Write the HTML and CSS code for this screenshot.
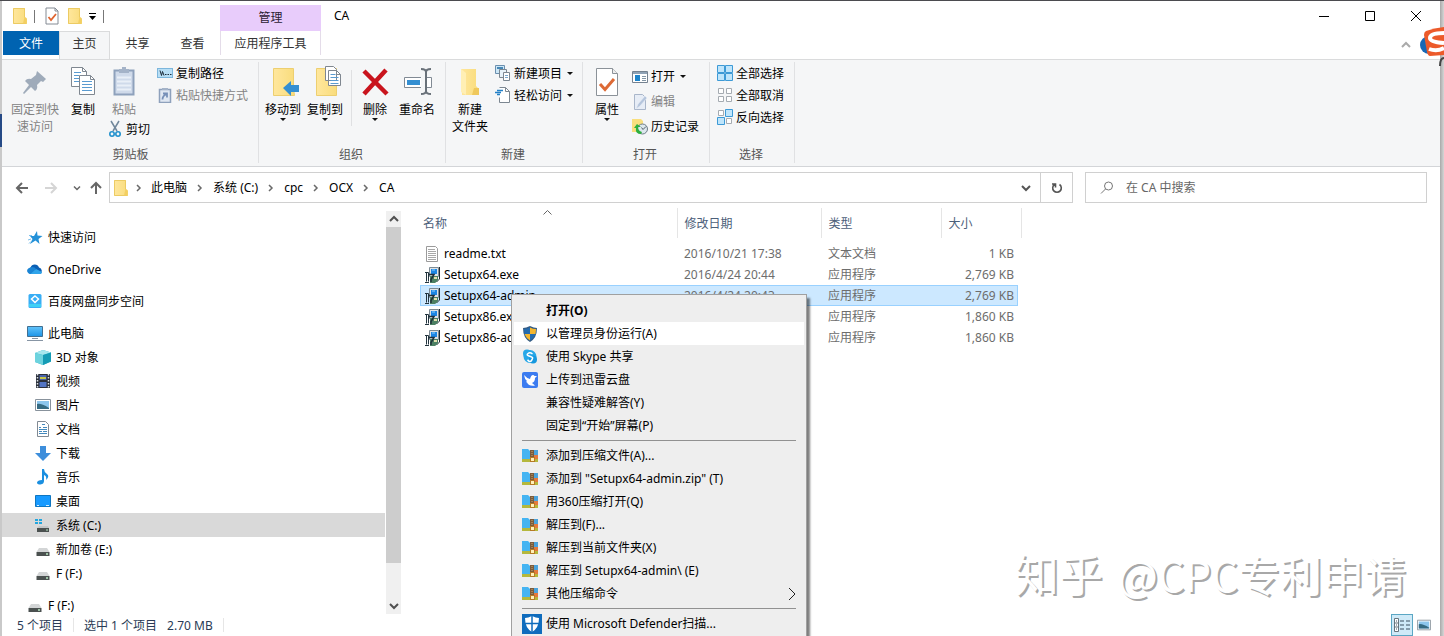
FILE: index.html
```html
<!DOCTYPE html>
<html lang="zh-CN">
<head>
<meta charset="utf-8">
<title>CA</title>
<link rel="stylesheet" href="styles.css">
</head>
<body>
<svg class="defs" aria-hidden="true">
  <defs>
    <linearGradient id="gFolder" x1="0" y1="0" x2="1" y2="0"><stop offset="0" stop-color="#ffe79d"/><stop offset="1" stop-color="#f9dc7c"/></linearGradient>
    <linearGradient id="gSky" x1="0" y1="0" x2="0" y2="1"><stop offset="0" stop-color="#62c4fb"/><stop offset="1" stop-color="#1e94e6"/></linearGradient>
  </defs>
  <symbol id="folder" viewBox="0 0 16 18"><path d="M1 1h12v9l2 2v5H1z" fill="url(#gFolder)"/><path d="M1.500 1.500h11v9M14 11.500v5H1.500v-15" fill="none" stroke="#eccb63"/><path d="M12.500 10l-1.500 6.500h3.500V11z" fill="#f3cf62"/></symbol>
  <symbol id="check" viewBox="0 0 14 18"><path d="M1 1h9l3 3v13H1z" fill="#fff" stroke="#848b94"/><path d="M10 1v3h3" fill="none" stroke="#848b94"/><path d="M3.500 10l2.500 3 5-6" fill="none" stroke="#e0642f" stroke-width="1.800"/></symbol>
  <symbol id="bigcheck" viewBox="0 0 24 32"><path d="M1.500 2.500h16l5 5v22h-21z" fill="#fff" stroke="#8b9299"/><path d="M17.500 2.500v5h5" fill="#eee" stroke="#8b9299"/><path d="M5 18l5 5.500L19 13" fill="none" stroke="#dd6a35" stroke-width="3"/></symbol>
  <symbol id="pin" viewBox="0 0 32 32"><path d="M18 5l9 8-3 3-2-1-4 4q1 4-2 6l-4-4-7 7-1-1 6-8-4-4q2-3 6-2l5-4z" fill="#9fabba"/></symbol>
  <symbol id="copy" viewBox="0 0 32 32"><g fill="#fff" stroke="#7f8790"><path d="M4.500 1.500h11l4 4v15h-15z"/><path d="M15.500 1.500v4h4" fill="none"/><path d="M12.500 9.500h11l4 4v15h-15z"/><path d="M23.500 9.500v4h4" fill="none"/></g><path d="M7 6.500h7M7 9.500h5M7 12.500h5M7 15.500h5M15 15.500h10M15 18.500h10M15 21.500h10M15 24.500h10" stroke="#5a9bd0" fill="none"/></symbol>
  <symbol id="paste" viewBox="0 0 32 32"><rect x="6.500" y="4.500" width="19" height="24" fill="#cfdaea" stroke="#8ea1bc" stroke-width="2"/><path d="M11 7V3h3V1h4v2h3v4z" fill="#a4b3c8"/><path d="M9 11.500h14M9 15.500h14M9 19.500h14M9 23.500h14" stroke="#e9eff7" stroke-width="2"/></symbol>
  <symbol id="path" viewBox="0 0 16 16"><rect x=".5" y="3.500" width="15" height="9" fill="#b7def5" stroke="#7cb6dc"/><path d="M3 5.500l1.500 5 1-4 1.500 4" fill="none" stroke="#1d2d3c"/><path d="M8 9.500h1.500M10.500 9.500H12M13 9.500h1.500" stroke="#1d2d3c"/></symbol>
  <symbol id="pshort" viewBox="0 0 16 16"><path d="M2.500 2.500h11v13h-11z" fill="#dfe7f2" stroke="#8ea1bc" stroke-width="1.500"/><path d="M5 3V1h6v2z" fill="#a4b3c8"/><path d="M5.500 12.500q0-4 4-5M6 6.500h4v4" fill="none" stroke="#7790b8" stroke-width="1.800"/></symbol>
  <symbol id="cut" viewBox="0 0 12 18"><path d="M2 1l6 10M10 1L4 11" stroke="#71879b" stroke-width="1.500"/><circle cx="3" cy="14" r="2.200" fill="none" stroke="#2291cd" stroke-width="1.600"/><circle cx="9" cy="14" r="2.200" fill="none" stroke="#2291cd" stroke-width="1.600"/></symbol>
  <symbol id="move" viewBox="0 0 32 32"><path d="M6.500 2.500h20v20l1 7h-21z" fill="url(#gFolder)" stroke="#edcf70"/><path d="M16 22l8-7v4h8v7h-8v4z" fill="#348fd2"/></symbol>
  <symbol id="copyto" viewBox="0 0 32 32"><path d="M7.500 2.500h20v27h-20z" fill="url(#gFolder)" stroke="#edcf70"/><path d="M16.500 .5h8l3 3v11h-11zM19.500 4.500h8l4 4v11h-12z" fill="#fff" stroke="#7f8790"/><path d="M27.500 4.500v4h4" fill="none" stroke="#7f8790"/><path d="M21.500 8.500h5M21.500 11.500h8M21.500 14.500h8M21.500 17.500h8" stroke="#5a9bd0"/></symbol>
  <symbol id="del" viewBox="0 0 32 32"><path d="M5 5l23 23M27 4L5 28" stroke="#c9141d" stroke-width="4.500"/></symbol>
  <symbol id="ren" viewBox="0 0 32 32"><path d="M20 11.500H3.500v10H20M26 11.500h4.500v10H26" fill="#fff" stroke="#818a94"/><rect x="6" y="14" width="13" height="5" fill="#348fd2"/><path d="M20 3q5 0 5 3q0-3 5-3M20 28q5 0 5-3q0 3 5 3M25 6v19" fill="none" stroke="#697179" stroke-width="2"/></symbol>
  <symbol id="newf" viewBox="0 0 32 32"><path d="M7 3h15v17l3 3v6H8z" fill="url(#gFolder)"/><path d="M7 3l5 4v22l-5-3z" fill="#ffefb5"/><path d="M20 22l-2 7h7v-7z" fill="#efc85c"/></symbol>
  <symbol id="newi" viewBox="0 0 16 16"><path d="M.5 .5h9v8h-9z" fill="#cce7f7" stroke="#6b8fae"/><path d="M2 3h6" stroke="#4787b5" stroke-width="2"/><path d="M4.500 4.500h7v8h-7z" fill="#e8f3fa" stroke="#7c8791"/><path d="M8.500 7.500h6v8h-6z" fill="#fff" stroke="#7c8791"/><path d="M10 10.500h3M10 12.500h3" stroke="#7aa7cc"/></symbol>
  <symbol id="easy" viewBox="0 0 16 16"><path d="M4.500 .5h6l4 4v11h-10v-5" fill="#fff" stroke="#7c8791"/><path d="M10.500 .5v4h4" fill="none" stroke="#7c8791"/><path d="M2 3.500h6M0 5.500h6M2 7.500h3" stroke="#2380c7" stroke-width="1.500"/></symbol>
  <symbol id="open" viewBox="0 0 16 16"><path d="M.5 2.500h15v11H.5z" fill="#fff" stroke="#758290"/><path d="M1 4h14" stroke="#8fa2b5" stroke-width="2"/><rect x="3" y="6" width="5" height="6" fill="#1c84cb"/><path d="M10 7.500h4M10 9.500h4M10 11.500h4" stroke="#8295a5"/></symbol>
  <symbol id="edit" viewBox="0 0 16 16"><path d="M2.500 .5h8l3 3v12h-11z" fill="#e7edf6" stroke="#a9b6ca"/><path d="M4 15l2-5 7-8 2 2-7 8z" fill="#b5c5dc" stroke="#e9eff7" stroke-width=".6"/></symbol>
  <symbol id="hist" viewBox="0 0 16 16"><path d="M0 0h9l2 2v11H0z" fill="#f9df7e"/><circle cx="10.500" cy="10" r="5" fill="#dce7ed" stroke="#6b7b86"/><path d="M9.500 8.500l1.500 2 3-3" fill="none" stroke="#515f69"/><path d="M9 15Q3 15 4 9L2 9l3-4 4 3H6q0 4 4 5z" fill="#2eaf3f"/></symbol>
  <symbol id="selall" viewBox="0 0 16 16"><path d="M.5.500h7v7h-7zM8.500.500h7v7h-7zM.5 8.500h7v7h-7zM8.500 8.500h7v7h-7z" fill="#bfe5fb" stroke="#3d9ad6"/></symbol>
  <symbol id="selnone" viewBox="0 0 16 16"><path d="M1.500 1.500h5v5h-5zM9.500 1.500h5v5h-5zM1.500 9.500h5v5h-5zM9.500 9.500h5v5h-5z" fill="#fff" stroke="#a5abb1"/></symbol>
  <symbol id="selinv" viewBox="0 0 16 16"><path d="M1.500 1.500h5v5h-5zM9.500 9.500h5v5h-5z" fill="#fff" stroke="#a5abb1"/><path d="M8.500.500h7v7h-7zM.5 8.500h7v7h-7z" fill="#bfe5fb" stroke="#3d9ad6"/></symbol>
  <symbol id="star" viewBox="0 0 16 16"><path d="M10 2l.5 4.500 5 .5-4 3 1 5-4-3.500-5.500 3.500 2.500-5L3 7h4z" fill="#2491d8"/><path d="M1 11l3-1M2 6.500h3M2 14.500l2-2" stroke="#7cc0ec"/></symbol>
  <symbol id="cloud" viewBox="0 0 16 16"><path d="M3.500 13a3.500 3.500 0 0 1 0-6.500A4.500 4.500 0 0 1 12 6.500 3.500 3.500 0 0 1 13 13z" fill="#0a5fb4"/><path d="M2 12l7-4 6 3q0 2-2 2H3z" fill="#30a4ea"/><path d="M9 8q-1-2-4-2l-3 1q-2 1-2 3 1 3 3.500 3z" fill="#1b84d4"/></symbol>
  <symbol id="baidu" viewBox="0 0 16 16"><rect x="1.500" y="1" width="13" height="14" rx="1.500" fill="#39aef5"/><path d="M2 11h12v3H2z" fill="#3fd0f5"/><path d="M8 3l3.500 3L8 9.500 4.500 6z" fill="none" stroke="#fff" stroke-width="1.500"/></symbol>
  <symbol id="pc" viewBox="0 0 16 16"><path d="M.5 1.500h15v10H.5z" fill="url(#gSky)" stroke="#416f91"/><path d="M5 13.500h6M0 15.500h16" stroke="#8795a4"/></symbol>
  <symbol id="cube" viewBox="0 0 16 16"><path d="M8 1l8 2.500v9L8 16 0 13V4z" fill="#2fb6c9"/><path d="M8 1l8 2.500L8 6 0 4z" fill="#a7e7ee"/><path d="M8 6l8-2.500v9L8 16z" fill="#159cb5"/><path d="M0 4l8 2v10l-8-3z" fill="#6dd3de"/></symbol>
  <symbol id="video" viewBox="0 0 16 16"><path d="M1 1h14v14H1z" fill="#2a2f3a"/><path d="M2.500 1v14M13.500 1v14" stroke="#dce1e5" stroke-width="1.500" stroke-dasharray="1.500 1.500"/><path d="M4.500 2h7v5h-7z" fill="#4863ad"/><path d="M5 5h6" stroke="#c7c548" stroke-width="2"/><path d="M4.500 9h7v5h-7z" fill="#5274c4"/></symbol>
  <symbol id="pic" viewBox="0 0 16 16"><path d="M.5 2.500h15v11H.5z" fill="#fff" stroke="#88929c"/><path d="M2 4h12v8H2z" fill="#8cc6ed"/><path d="M2 7q4-1 12 4v1H2z" fill="#356b83"/></symbol>
  <symbol id="doc" viewBox="0 0 16 16"><path d="M2.500 .5h8l3 3v12h-11z" fill="#fff" stroke="#818a93"/><path d="M7 3.500h3M4 6.500h2M8 6.500h4M4 8.500h8M4 10.500h3M8 10.500h4M4 12.500h8" stroke="#4389bd"/></symbol>
  <symbol id="down" viewBox="0 0 16 16"><path d="M5 1h6v7h5l-8 8-8-8h5z" fill="#3d8edb"/></symbol>
  <symbol id="music" viewBox="0 0 16 16"><path d="M7 0h2q0 3 3 5t-1 6q1-4-2-5v6q0 3-3.500 3.500Q2 15.500 2 13.500 2.500 11 7 11z" fill="#1a8fe0"/></symbol>
  <symbol id="desk" viewBox="0 0 16 16"><path d="M.5 2.500h15v11H.5z" fill="#179aff" stroke="#0f76c1"/><path d="M2 12.500h2M11 12.500h3" stroke="#d6efff"/></symbol>
  <symbol id="drive" viewBox="0 0 16 16"><path d="M4 7h8l2.500 4h-13z" fill="#d3d5d6"/><path d="M1.500 11h13v4h-13z" fill="#4b5150"/><path d="M11 13h2" stroke="#b9e8c3" stroke-width="1.500"/></symbol>
  <symbol id="cdrive" viewBox="0 0 16 16"><path d="M0 2h3v2H0zM4 2h3v2H4zM0 5h3v2H0zM4 5h3v2H4z" fill="#22a6df"/><path d="M4 9h9l1 2H2z" fill="#c3c6c8"/><path d="M2 11h12v4H2z" fill="#4b5150"/><path d="M11 13h2" stroke="#b9e8c3"/></symbol>
  <symbol id="txt" viewBox="0 0 16 16"><path d="M2.500 .5h9l2 2v13h-11z" fill="#fff" stroke="#9b9b9b"/><path d="M4 3.500h7M4 5.500h8M4 7.500h8M4 9.500h8M4 11.500h8M4 13.500h8" stroke="#a8a8a8"/></symbol>
  <symbol id="setup" viewBox="0 0 16 16"><path d="M5.500.500h9v9h-9z" fill="#dfe3e6" stroke="#7d8b94"/><path d="M7 2h6v5H7z" fill="#1c86e4"/><path d="M8 3h3" stroke="#8fd0fb"/><path d="M15.500 0v12l-3 3" fill="none" stroke="#1f2a31"/><path d="M6 9h8v4q-1 2-3 3H6z" fill="#4c8063"/><path d="M10 10h3v2h-3z" fill="#e4dfae"/><path d="M1 5.500h3.500v9M2.500 5.500v9M1 15.500h4" fill="none" stroke="#23343e"/><path d="M5 7.500h5l-3 5v2.500" fill="none" stroke="#1f3039" stroke-width="1.500"/></symbol>
  <symbol id="shield" viewBox="0 0 16 16"><path d="M8 0q4 2 7 2 0 10-7 14Q1 12 1 2q3 0 7-2z" fill="#335c85"/><path d="M8 1.500V8H2.500Q2 5 2 3q3 0 6-1.500zM8 8h5.500q-1.500 4-5.500 6.500z" fill="#246baf"/><path d="M8 1.500V8h5.500Q14 5 14 3q-3 0-6-1.500zM8 8H2.500q1.500 4 5.500 6.500z" fill="#f5b62d"/></symbol>
  <symbol id="skype" viewBox="0 0 16 16"><circle cx="8" cy="7.500" r="6.500" fill="#28a8e8"/><circle cx="5" cy="4.500" r="4" fill="#28a8e8"/><circle cx="11" cy="10.500" r="4" fill="#1598df"/><path d="M10.500 5Q8 3 6 4.500t1 2.500 3.500 1.500-1 3-4-.8" fill="none" stroke="#fff" stroke-width="1.500"/></symbol>
  <symbol id="bird" viewBox="0 0 16 16"><rect width="16" height="16" rx="2" fill="#3c7cf0"/><path d="M2 3q3 3.500 6 4 1-4 3-4 1 0 1.500 1H15l-2 2q0 4-3 5l3 2.500q-6 1-8-3l-1-.5 1-1Q2.500 7 2 3z" fill="#fff"/></symbol>
  <symbol id="zip" viewBox="0 0 16 16"><path d="M0 1h6l2 2h2v9H0z" fill="#45b4f2"/><path d="M12 2h4v9h-4z" fill="#4aa3dc"/><path d="M12 7h4v4h-4z" fill="#e5793b"/><path d="M0 11h16v3H0z" fill="#b5b83c"/><path d="M8 2h4v12H8z" fill="#7b5b3c"/><path d="M10 3v7" stroke="#cdaa70" stroke-dasharray="1 1"/><rect x="8.500" y="9.500" width="4" height="4" fill="#fff0b8" stroke="#b77a24"/></symbol>
  <symbol id="defender" viewBox="0 0 20 20"><path d="M0 0h20v20H0z" fill="#0f6cbd"/><path d="M10 2q4 2 7 2 0 10-7 14Q3 14 3 4q3 0 7-2z" fill="#fff"/><path d="M10 2v16M3 9.500h14" stroke="#0f6cbd" stroke-width="1.500"/></symbol>
  <symbol id="chevr" viewBox="0 0 8 10"><path d="M2 2l3 3-3 3" fill="none" stroke="#6a6a6a" stroke-width="1.500"/></symbol>
  <symbol id="chevd" viewBox="0 0 10 8"><path d="M1 2l4 4 4-4" fill="none" stroke="currentColor" stroke-width="2"/></symbol>
  <symbol id="chevu" viewBox="0 0 10 8"><path d="M1 6l4-4 4 4" fill="none" stroke="currentColor" stroke-width="2"/></symbol>
  <symbol id="arrow" viewBox="0 0 14 14"><path d="M13 7H2M7 2L2 7l5 5" fill="none" stroke="currentColor" stroke-width="2"/></symbol>
</svg>

<div class="desktop">
  <div class="edge-left"></div>
  <div class="window">
    <header class="titlebar">
      <div class="quick">
        <svg width="16" height="18"><use href="#folder"/></svg><i class="tick"></i>
        <svg width="14" height="18"><use href="#check"/></svg>
        <svg width="16" height="18"><use href="#folder"/></svg>
        <svg class="more" width="7" height="7" viewBox="0 0 7 7"><path d="M0 0h7v1H0zM0 3h7L3.500 7z"/></svg><i class="tick"></i>
      </div>
      <div class="context-title">管理</div>
      <div class="title">CA</div>
      <div class="caption">
        <button aria-label="最小化"><svg width="12" height="12" viewBox="0 0 12 12"><path d="M1 6.500h10" stroke="#000"/></svg></button>
        <button aria-label="最大化"><svg width="12" height="12" viewBox="0 0 12 12"><path d="M1.500 1.500h9v9h-9z" fill="none" stroke="#000"/></svg></button>
        <button aria-label="关闭"><svg width="12" height="12" viewBox="0 0 12 12"><path d="M1 1l10 10M11 1L1 11" stroke="#000"/></svg></button>
      </div>
    </header>
    <nav class="tabs">
      <button class="tab file">文件</button>
      <button class="tab home">主页</button>
      <button class="tab">共享</button>
      <button class="tab">查看</button>
      <button class="tab tool">应用程序工具</button>
      <button class="collapse" aria-label="折叠功能区"><svg width="10" height="8"><use href="#chevu"/></svg></button>
    </nav>

    <section class="ribbon">
      <div class="group g-clip">
        <div class="tools">
          <button class="big wide dim"><svg width="32" height="32"><use href="#pin"/></svg>固定到快<br>速访问</button>
          <button class="big"><svg width="32" height="32"><use href="#copy"/></svg>复制</button>
          <div class="paste-col">
            <button class="big dim"><svg width="32" height="32"><use href="#paste"/></svg>粘贴</button>
            <button class="small"><svg width="12" height="18"><use href="#cut"/></svg>剪切</button>
          </div>
          <div class="list">
            <button class="small"><svg width="16" height="16"><use href="#path"/></svg>复制路径</button>
            <button class="small dim"><svg width="16" height="16"><use href="#pshort"/></svg>粘贴快捷方式</button>
          </div>
        </div>
        <div class="glabel">剪贴板</div>
      </div>
      <div class="group g-org">
        <div class="tools">
          <button class="big"><svg width="32" height="32"><use href="#move"/></svg>移动到<i class="caret"></i></button>
          <button class="big"><svg width="32" height="32"><use href="#copyto"/></svg>复制到<i class="caret"></i></button>
          <i class="vsep"></i>
          <button class="big"><svg width="32" height="32"><use href="#del"/></svg>删除<i class="caret"></i></button>
          <button class="big"><svg width="32" height="32"><use href="#ren"/></svg>重命名</button>
        </div>
        <div class="glabel">组织</div>
      </div>
      <div class="group g-new">
        <div class="tools">
          <button class="big"><svg width="32" height="32"><use href="#newf"/></svg>新建<br>文件夹</button>
          <div class="list">
            <button class="small"><svg width="16" height="16"><use href="#newi"/></svg>新建项目<i class="caret"></i></button>
            <button class="small"><svg width="16" height="16"><use href="#easy"/></svg>轻松访问<i class="caret"></i></button>
          </div>
        </div>
        <div class="glabel">新建</div>
      </div>
      <div class="group g-open">
        <div class="tools">
          <button class="big"><svg width="24" height="32"><use href="#bigcheck"/></svg>属性<i class="caret"></i></button>
          <div class="list loose">
            <button class="small"><svg width="16" height="16"><use href="#open"/></svg>打开<i class="caret"></i></button>
            <button class="small dim"><svg width="16" height="16"><use href="#edit"/></svg>编辑</button>
            <button class="small"><svg width="16" height="16"><use href="#hist"/></svg>历史记录</button>
          </div>
        </div>
        <div class="glabel">打开</div>
      </div>
      <div class="group g-sel">
        <div class="tools">
          <div class="list">
            <button class="small"><svg width="16" height="16"><use href="#selall"/></svg>全部选择</button>
            <button class="small"><svg width="16" height="16"><use href="#selnone"/></svg>全部取消</button>
            <button class="small"><svg width="16" height="16"><use href="#selinv"/></svg>反向选择</button>
          </div>
        </div>
        <div class="glabel">选择</div>
      </div>
    </section>

    <div class="address">
      <div class="history">
        <button aria-label="后退"><svg width="14" height="14"><use href="#arrow"/></svg></button>
        <button class="off" aria-label="前进"><svg class="flip" width="14" height="14"><use href="#arrow"/></svg></button>
        <button class="recent" aria-label="最近"><svg width="8" height="6"><use href="#chevd"/></svg></button>
        <button aria-label="向上"><svg class="up" width="14" height="14"><use href="#arrow"/></svg></button>
      </div>
      <div class="crumbs">
        <svg width="16" height="18"><use href="#folder"/></svg>
        <svg class="sep" width="8" height="10"><use href="#chevr"/></svg><button>此电脑</button>
        <svg class="sep" width="8" height="10"><use href="#chevr"/></svg><button>系统 (C:)</button>
        <svg class="sep" width="8" height="10"><use href="#chevr"/></svg><button>cpc</button>
        <svg class="sep" width="8" height="10"><use href="#chevr"/></svg><button>OCX</button>
        <svg class="sep" width="8" height="10"><use href="#chevr"/></svg><button>CA</button>
        <button class="drop" aria-label="历史地址"><svg width="10" height="8"><use href="#chevd"/></svg></button>
        <button class="refresh" aria-label="刷新"><svg width="12" height="12" viewBox="0 0 12 12"><path d="M8.500 2.500a4.300 4.300 0 1 1-5 0M4.500 5.500V2H1" fill="none" stroke="#555" stroke-width="1.600"/></svg></button>
      </div>
      <label class="search">
        <svg width="14" height="14" viewBox="0 0 14 14"><circle cx="8.500" cy="5" r="4" fill="none" stroke="#777"/><path d="M5.500 8L1 12.500" stroke="#777"/></svg>
        <input type="text" placeholder="在 CA 中搜索" aria-label="搜索">
      </label>
    </div>

    <main class="main">
      <ul class="tree">
        <li class="top"><svg width="16" height="16"><use href="#star"/></svg>快速访问</li>
        <li class="top"><svg width="16" height="16"><use href="#cloud"/></svg>OneDrive</li>
        <li class="top"><svg width="16" height="16"><use href="#baidu"/></svg>百度网盘同步空间</li>
        <li class="top"><svg width="16" height="16"><use href="#pc"/></svg>此电脑</li>
        <li><svg width="16" height="16"><use href="#cube"/></svg>3D 对象</li>
        <li><svg width="16" height="16"><use href="#video"/></svg>视频</li>
        <li><svg width="16" height="16"><use href="#pic"/></svg>图片</li>
        <li><svg width="16" height="16"><use href="#doc"/></svg>文档</li>
        <li><svg width="16" height="16"><use href="#down"/></svg>下载</li>
        <li><svg width="16" height="16"><use href="#music"/></svg>音乐</li>
        <li><svg width="16" height="16"><use href="#desk"/></svg>桌面</li>
        <li class="current"><svg width="16" height="16"><use href="#cdrive"/></svg>系统 (C:)</li>
        <li><svg width="16" height="16"><use href="#drive"/></svg>新加卷 (E:)</li>
        <li><svg width="16" height="16"><use href="#drive"/></svg>F (F:)</li>
        <li class="top"><svg width="16" height="16"><use href="#drive"/></svg>F (F:)</li>
      </ul>
      <div class="scroll">
        <svg width="10" height="8"><use href="#chevu"/></svg>
        <div class="thumb"></div>
        <svg width="10" height="8"><use href="#chevd"/></svg>
      </div>
      <div class="files">
        <table>
          <thead>
            <tr><th class="c-name">名称<svg class="sorted" width="9" height="5" viewBox="0 0 9 5"><path d="M.5 4.500l4-4 4 4" fill="none" stroke="#666"/></svg></th><th class="c-date">修改日期</th><th class="c-type">类型</th><th class="c-size">大小</th></tr>
          </thead>
          <tbody>
            <tr><td><span class="fname"><svg width="16" height="16"><use href="#txt"/></svg>readme.txt</span></td><td>2016/10/21 17:38</td><td>文本文档</td><td>1 KB</td></tr>
            <tr><td><span class="fname"><svg width="16" height="16"><use href="#setup"/></svg>Setupx64.exe</span></td><td>2016/4/24 20:44</td><td>应用程序</td><td>2,769 KB</td></tr>
            <tr class="selected"><td><span class="fname"><svg width="16" height="16"><use href="#setup"/></svg>Setupx64-admin</span></td><td>2016/4/24 20:43</td><td>应用程序</td><td>2,769 KB</td></tr>
            <tr><td><span class="fname"><svg width="16" height="16"><use href="#setup"/></svg>Setupx86.exe</span></td><td>2016/4/24 20:43</td><td>应用程序</td><td>1,860 KB</td></tr>
            <tr><td><span class="fname"><svg width="16" height="16"><use href="#setup"/></svg>Setupx86-admin</span></td><td>2016/4/24 20:43</td><td>应用程序</td><td>1,860 KB</td></tr>
          </tbody>
        </table>
      </div>
    </main>

    <footer class="status">
      <span>5 个项目</span><i></i><span>选中 1 个项目</span><span class="size">2.70 MB</span><i></i>
      <div class="views">
        <button class="on" aria-label="详细信息"><svg width="16" height="14" viewBox="0 0 16 14"><path d="M.5.500h4v13h-4zM.5 5h4M.5 9h4" fill="#fff" stroke="#67757e"/><path d="M2 3h1M2 7h1M2 11h1M6 3h4M12 3h4M6 7h4M12 7h4M6 11h4M12 11h4" stroke="#3c5060"/></svg></button>
        <button aria-label="大图标"><svg width="14" height="14"><use href="#pic"/></svg></button>
      </div>
    </footer>
  </div>
  <div class="edge-right"></div>

  <div class="menu" role="menu">
    <button role="menuitem"><span class="ico"></span><b>打开(O)</b></button>
    <button role="menuitem" class="hot"><span class="ico"><svg width="16" height="16"><use href="#shield"/></svg></span>以管理员身份运行(A)</button>
    <button role="menuitem"><span class="ico"><svg width="16" height="16"><use href="#skype"/></svg></span>使用 Skype 共享</button>
    <button role="menuitem"><span class="ico"><svg width="16" height="16"><use href="#bird"/></svg></span>上传到迅雷云盘</button>
    <button role="menuitem"><span class="ico"></span>兼容性疑难解答(Y)</button>
    <button role="menuitem"><span class="ico"></span>固定到“开始”屏幕(P)</button>
    <hr>
    <button role="menuitem"><span class="ico"><svg width="16" height="16"><use href="#zip"/></svg></span>添加到压缩文件(A)...</button>
    <button role="menuitem"><span class="ico"><svg width="16" height="16"><use href="#zip"/></svg></span>添加到 "Setupx64-admin.zip" (T)</button>
    <button role="menuitem"><span class="ico"><svg width="16" height="16"><use href="#zip"/></svg></span>用360压缩打开(Q)</button>
    <button role="menuitem"><span class="ico"><svg width="16" height="16"><use href="#zip"/></svg></span>解压到(F)...</button>
    <button role="menuitem"><span class="ico"><svg width="16" height="16"><use href="#zip"/></svg></span>解压到当前文件夹(X)</button>
    <button role="menuitem"><span class="ico"><svg width="16" height="16"><use href="#zip"/></svg></span>解压到 Setupx64-admin\ (E)</button>
    <button role="menuitem"><span class="ico"><svg width="16" height="16"><use href="#zip"/></svg></span>其他压缩命令<svg class="sub" width="8" height="14" viewBox="0 0 8 14"><path d="M1 1l6 6-6 6" fill="none" stroke="#222"/></svg></button>
    <hr>
    <button role="menuitem"><span class="ico"><svg width="20" height="20"><use href="#defender"/></svg></span>使用 Microsoft Defender扫描...</button>
  </div>

  <div class="watermark"><span>知乎</span> @CPC专利申请</div>
  <svg class="ime" width="24" height="40" viewBox="0 0 24 40"><circle cx="9" cy="18" r="9" fill="#1768b5"/><path d="M6 4Q14 1 24 0v28l-14 1q-2 0-3-4L4 8q0-3 2-4z" fill="#ec5a2a"/><path d="M24 6Q10 6 10 11q0 4 14 5M9 22q8 3 15-1" fill="none" stroke="#fff" stroke-width="4"/><path d="M20 39q0-8 4-8" fill="none" stroke="#444" stroke-width="2"/></svg>
</div>
</body>
</html>
```

FILE: styles.css
```css
* { box-sizing: border-box; }
body {
  margin: 0;
  overflow: hidden;
  color: #000;
  font: 12px/17px "Noto Sans", "Noto Sans CJK SC", sans-serif;
}
button {
  margin: 0; padding: 0; border: 0;
  background: none; color: inherit; font: inherit;
}
svg { display: block; flex: none; }
.defs { position: absolute; width: 0; height: 0; }

.desktop { position: relative; display: flex; height: 100vh; overflow: hidden; border-top: 1px solid #4b4b4f; }
.edge-left { flex: 0 0 2px; background: linear-gradient(#c9c9c9 113px, #264a86 113px, #264a86 146px, #c9c9c9 146px); }
.edge-right { flex: 0 0 4px; background: linear-gradient(90deg, #a9a9a9, #d6d6d6); }
.window { display: flex; flex: 1; flex-direction: column; min-width: 0; background: #fff; }

.titlebar { display: flex; flex: 0 0 30px; }
.quick { display: flex; flex: 0 0 218px; align-items: center; padding-left: 10px; }
.quick .tick { width: 1px; height: 13px; margin: 0 10px 0 6px; background: #777; }
.quick svg + svg { margin-left: 8px; }
.quick svg + .more { margin-left: 6px; }
.quick .more + .tick { margin-left: 7px; }
.context-title { flex: 0 0 101px; margin-top: 4px; background: #e8ccfb; line-height: 26px; text-align: center; color: #2b2233; }
.title { flex: 1; padding-left: 13px; line-height: 30px; }
.caption { display: flex; padding-right: 1px; }
.caption button { display: grid; width: 46px; place-items: center; }

.tabs { display: flex; flex: 0 0 28px; padding-left: 1px; border-bottom: 1px solid #dadbdc; }
.tab { flex: 0 0 55px; height: 24px; color: #333; }
.tab.file { flex-basis: 56px; background: #0063b1; color: #fff; }
.tab.home { flex-basis: 51px; height: 28px; padding-bottom: 4px; border: 1px solid #dadbdc; border-bottom: 0; background: #f5f6f7; }
.tab.tool { flex-basis: 101px; border: 1px solid #e4dce9; border-width: 0 1px; }
.collapse { margin: 0 29px 0 auto; color: #aaa; }

.ribbon { display: flex; flex: 0 0 107px; border-bottom: 1px solid #d3d5d8; background: #f5f6f7; }
.group { position: relative; display: flex; flex-direction: column; padding: 6px 0 3px 3px; }
.group::after { position: absolute; top: 2px; right: 0; bottom: 3px; width: 1px; background: #e0e1e3; content: ""; }
.g-clip { width: 257px; padding-left: 6px; }
.g-org { width: 187px; }
.g-new { width: 137px; }
.g-open { width: 127px; }
.g-sel { width: 85px; }
.tools { display: flex; flex: 1; align-items: flex-start; }
.glabel { padding-right: 6px; color: #555; text-align: center; }
.big { display: block; width: 42px; white-space: nowrap; }
.big svg { margin: 0 auto 3px; }
.wide { width: 54px; }
.dim { color: #838383; }
.caret { display: inline-block; border: solid transparent; border-width: 3px 3px 0; border-top-color: #111; }
.big .caret { display: block; width: 0; margin: 0 auto; }
.paste-col { width: 50px; margin-left: -1px; }
.paste-col .small { gap: 5px; margin-left: 6px; }
.list { margin: -4px 0 0 4px; }
.small { display: flex; gap: 3px; align-items: center; height: 22px; white-space: nowrap; }
.small .caret { margin-left: 2px; }
.loose { margin-top: -2px; }
.loose .small { height: 25px; }
.vsep { width: 1px; height: 56px; margin: 4px 2px 0 5px; background: #dfe0e2; }

.address { display: flex; flex: 0 0 41px; align-items: center; padding-right: 13px; }
.history { display: flex; flex: 0 0 107px; gap: 12px; align-items: center; padding-left: 13px; color: #666; }
.history button + button { margin-left: 3px; }
.history .recent { margin-right: -2px; }
.history .recent + button { margin-left: -2px; }
.off { color: #d5d5d5; }
.flip { transform: rotate(180deg); }
.up { transform: rotate(90deg); }
.crumbs { display: flex; flex: 1; align-items: center; height: 31px; padding-left: 3px; border: 1px solid #d0d0d0; }
.crumbs .sep { margin: 0 9px; }
.crumbs svg + .sep { margin: 0 8px 0 6px; }
.drop { margin-left: auto; padding: 0 9px; color: #555; }
.refresh { display: grid; width: 32px; height: 29px; border-left: 1px solid #d0d0d0; place-items: center; }
.search { display: flex; flex: 0 1 342px; gap: 12px; align-items: center; height: 31px; margin-left: 12px; padding-left: 14px; border: 1px solid #d0d0d0; }
.search input { flex: 1; min-width: 0; padding: 0; border: 0; outline: 0; background: none; color: #333; font: inherit; }
.search input::placeholder { color: #666; opacity: 1; }

.main { display: flex; flex: 1; min-height: 0; overflow: hidden; }
.tree { flex: 0 0 383px; margin: 0; padding: 17px 0 0; list-style: none; }
.tree li { display: flex; gap: 5px; align-items: center; height: 24px; padding-left: 33px; }
.tree .top { padding-left: 25px; }
.tree .top + .top, .tree li + .top { margin-top: 8px; }
.tree .current { background: #d9d9d9; }
.scroll { display: flex; flex: 0 0 15px; flex-direction: column; align-items: center; justify-content: space-between; margin: 3px 0 0 1px; padding: 4px 0; background: #f0f0f0; color: #505050; }
.scroll .thumb { width: 15px; flex: 0 0 336px; margin: 4px 0 auto; background: #cdcdcd; }
.files { flex: 1; min-width: 0; padding-left: 19px; }
table { width: 598px; border-collapse: collapse; table-layout: fixed; color: #6d6d6d; }
th { position: relative; height: 30px; padding: 0 7px; border-right: 1px solid #e5e5e5; color: #4c607a; font-weight: 400; text-align: left; }
.c-name { width: 257px; padding-left: 3px; }
.c-date { width: 144px; }
.c-type { width: 120px; }
.c-size { border-right: 0; }
.c-size::after { position: absolute; top: 0; right: -4px; width: 1px; height: 30px; background: #e5e5e5; content: ""; }
.sorted { position: absolute; top: 2px; left: 123px; }
tbody::before { display: block; height: 5px; content: ""; }
td { height: 21px; padding: 0 4px 0 7px; white-space: nowrap; }
td:first-child { padding-left: 4px; color: #000; }
td:last-child { text-align: right; }
.fname { display: flex; gap: 4px; align-items: center; }
.selected { background: #cce8ff; outline: 1px solid #99d1ff; outline-offset: -1px; }

.status { display: flex; flex: 0 0 22px; align-items: center; padding: 0 9px 0 15px; color: #2a3b55; }
.status i { width: 1px; height: 14px; margin: 0 10px; background: #e6e6e6; }
.status .size { margin-left: 10px; }
.views { display: flex; gap: 4px; align-items: center; margin-left: auto; }
.views .on { display: grid; width: 22px; height: 22px; border: 1px solid #5ba7c4; background: #cfeaf8; place-items: center; }

.menu { position: absolute; top: 293px; left: 511px; width: 296px; padding: 4px 2px; border: 1px solid #a0a0a0; background: #eee; box-shadow: 3px 4px 2px rgba(0, 0, 0, .5); }
.menu button { display: flex; align-items: center; width: 100%; height: 23px; padding-right: 8px; text-align: left; white-space: nowrap; }
.menu .hot { background: #fff; }
.menu .ico { flex: 0 0 24px; margin-left: 8px; }
.menu hr { height: 1px; margin: 3px 8px; border: 0; background: #919191; }
.menu .sub { margin-left: auto; }

.watermark { position: absolute; right: 38px; bottom: 32px; color: #fff; font: 42px/60px "Noto Sans CJK SC", sans-serif; white-space: nowrap; text-shadow: 2px 2px 0 #a8a8a8; }
.watermark span { margin-right: 6px; font-size: 44px; }
.ime { position: absolute; top: 26px; right: 0; }
```
